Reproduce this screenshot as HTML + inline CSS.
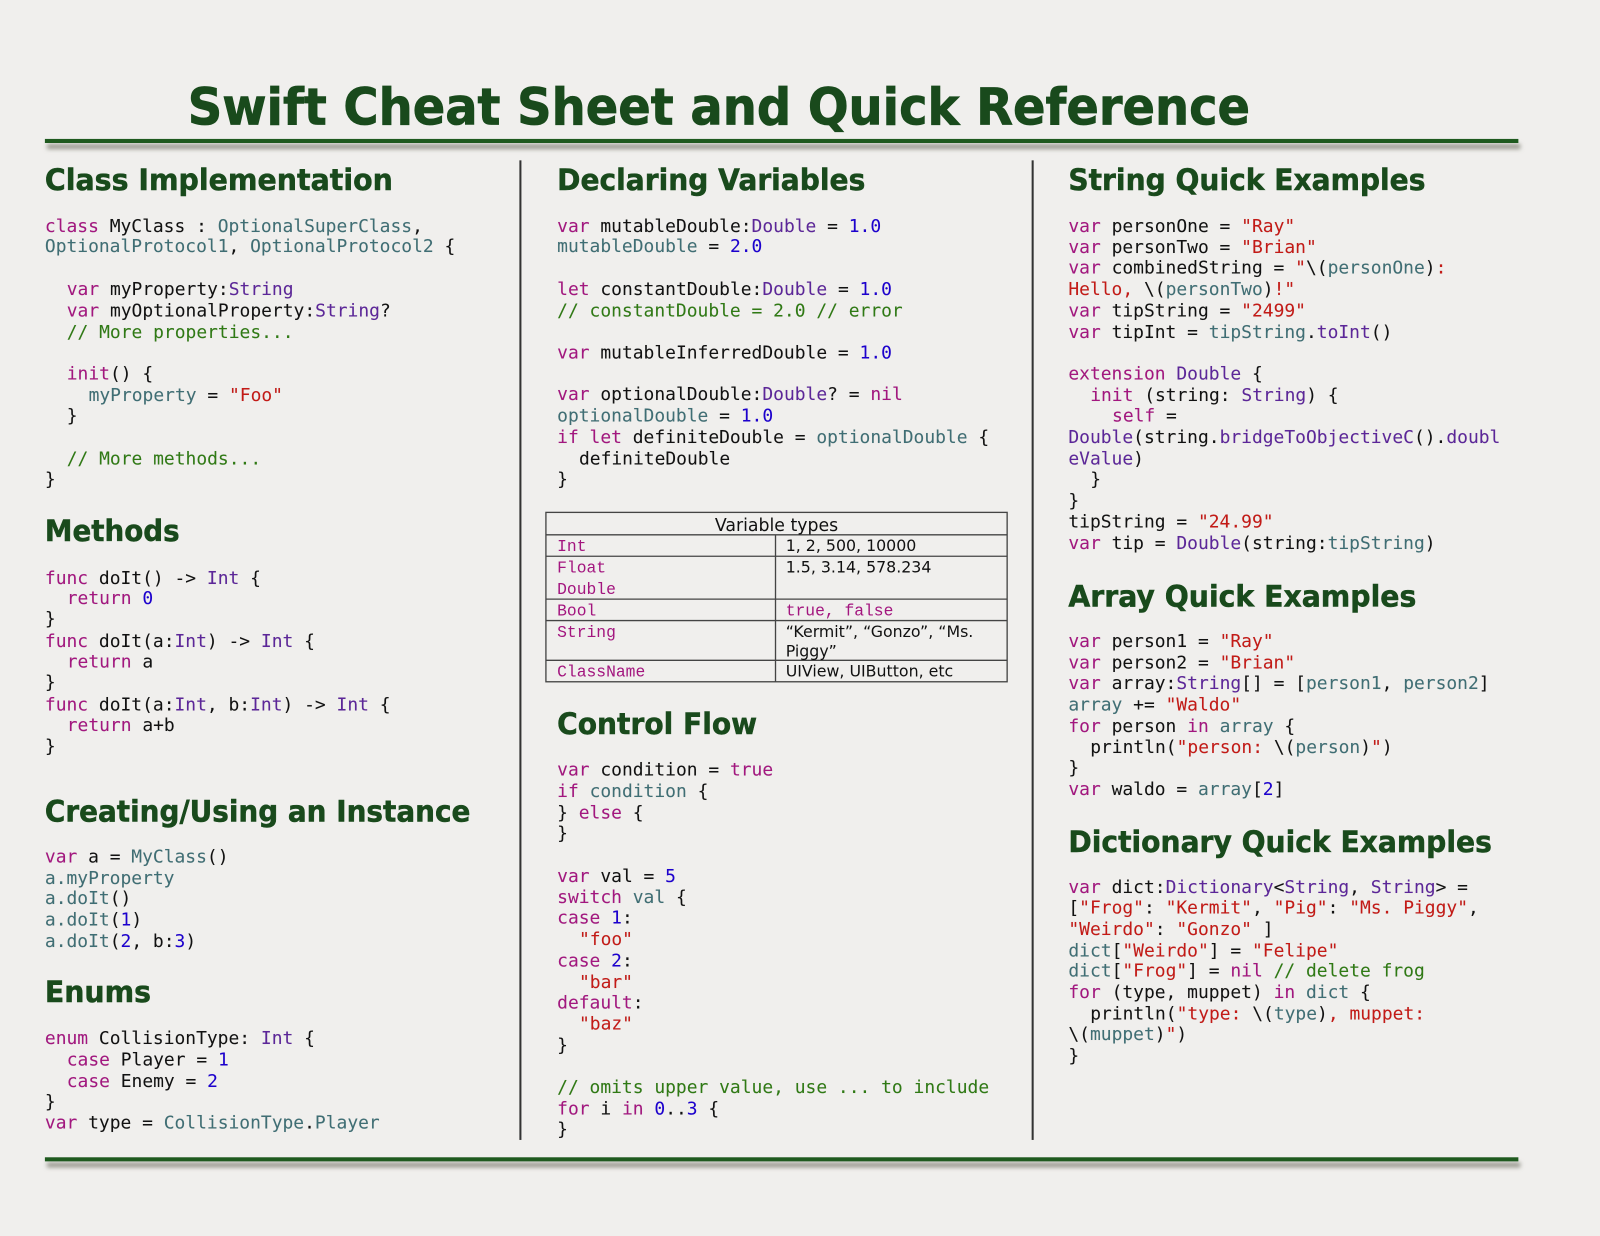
<!DOCTYPE html>
<html><head><meta charset="utf-8"><style>
html,body{margin:0;padding:0;background:#f0efed;}
svg{display:block}
.m{font-family:"DejaVu Sans Mono","Liberation Mono",monospace;font-size:17.6px;fill:#111;stroke:currentColor;stroke-width:0}
.m text, .m tspan{paint-order:stroke}
.h{font-family:"DejaVu Sans","Liberation Sans",sans-serif;font-weight:bold;fill:#194a1c;font-size:29px}
.k{fill:#a3167f}.t{fill:#5c2699}.s{fill:#c41a16}.n{fill:#1c00cf}.c{fill:#2f7a14}.i{fill:#3f6e74}
.tl{font-family:"Liberation Mono",monospace;font-size:16px;fill:#a3167f}
.tr{font-family:"DejaVu Sans","Liberation Sans",sans-serif;font-size:15.5px;fill:#111}
</style></head><body>
<svg width="1600" height="1236" viewBox="0 0 1568 1211" xmlns="http://www.w3.org/2000/svg" xml:space="preserve">
<defs><filter id="sh" x="-5%" y="-200%" width="110%" height="500%"><feGaussianBlur stdDeviation="2"/></filter></defs>
<rect width="1568" height="1211" fill="#f0efed"/>
<text x="184" y="122" class="h" style="font-size:50px;stroke:#194a1c;stroke-width:0.8" textLength="1041" lengthAdjust="spacingAndGlyphs">Swift Cheat Sheet and Quick Reference</text>
<rect x="46" y="141" width="1444" height="5" fill="#9a9a90" filter="url(#sh)"/>
<rect x="44" y="136" width="1444" height="4" fill="#1f5a1f"/>
<rect x="46" y="1139" width="1444" height="5" fill="#9a9a90" filter="url(#sh)"/>
<rect x="44" y="1134" width="1444" height="4" fill="#1f5a1f"/>
<rect x="509" y="157" width="2" height="960" fill="#333"/>
<rect x="1011" y="157" width="2" height="960" fill="#333"/>

<g style="stroke:#194a1c;stroke-width:0.5">
<text x="44" y="186" class="h" textLength="341" lengthAdjust="spacingAndGlyphs">Class Implementation</text>
<text x="44" y="530" class="h" textLength="132" lengthAdjust="spacingAndGlyphs">Methods</text>
<text x="44" y="805" class="h" textLength="417" lengthAdjust="spacingAndGlyphs">Creating/Using an Instance</text>
<text x="44" y="982" class="h" textLength="104" lengthAdjust="spacingAndGlyphs">Enums</text>
<text x="546" y="186" class="h" textLength="302" lengthAdjust="spacingAndGlyphs">Declaring Variables</text>
<text x="546" y="719" class="h" textLength="196" lengthAdjust="spacingAndGlyphs">Control Flow</text>
<text x="1047" y="186" class="h" textLength="350" lengthAdjust="spacingAndGlyphs">String Quick Examples</text>
<text x="1047" y="594" class="h" textLength="341" lengthAdjust="spacingAndGlyphs">Array Quick Examples</text>
<text x="1047" y="835" class="h" textLength="415" lengthAdjust="spacingAndGlyphs">Dictionary Quick Examples</text>
</g>

<g class="m" style="stroke:#00000022;stroke-width:0.3">
<text x="44" y="227"><tspan class="k">class</tspan> MyClass : <tspan class="i">OptionalSuperClass</tspan>,</text>
<text x="44" y="247"><tspan class="i">OptionalProtocol1</tspan>, <tspan class="i">OptionalProtocol2</tspan> {</text>
<text x="65.4" y="289"><tspan class="k">var</tspan> myProperty:<tspan class="t">String</tspan></text>
<text x="65.4" y="310"><tspan class="k">var</tspan> myOptionalProperty:<tspan class="t">String</tspan>?</text>
<text x="65.4" y="331" class="c">// More properties...</text>
<text x="65.4" y="372"><tspan class="k">init</tspan>()  {</text>
<text x="86.8" y="393"><tspan class="i">myProperty</tspan> = <tspan class="s">"Foo"</tspan></text>
<text x="65.4" y="413">}</text>
<text x="65.4" y="455" class="c">// More methods...</text>
<text x="44" y="475">}</text>

<text x="44" y="572"><tspan class="k">func</tspan> doIt() -&gt; <tspan class="t">Int</tspan> {</text>
<text x="65.4" y="592"><tspan class="k">return</tspan> <tspan class="n">0</tspan></text>
<text x="44" y="612">}</text>
<text x="44" y="634"><tspan class="k">func</tspan> doIt(a:<tspan class="t">Int</tspan>) -&gt; <tspan class="t">Int</tspan> {</text>
<text x="65.4" y="654"><tspan class="k">return</tspan> a</text>
<text x="44" y="674">}</text>
<text x="44" y="696"><tspan class="k">func</tspan> doIt(a:<tspan class="t">Int</tspan>, b:<tspan class="t">Int</tspan>) -&gt; <tspan class="t">Int</tspan> {</text>
<text x="65.4" y="716"><tspan class="k">return</tspan> a+b</text>
<text x="44" y="737">}</text>

<text x="44" y="845"><tspan class="k">var</tspan> a = <tspan class="i">MyClass</tspan>()</text>
<text x="44" y="866" class="i">a.myProperty</text>
<text x="44" y="886"><tspan class="i">a.doIt</tspan>()</text>
<text x="44" y="907"><tspan class="i">a.doIt</tspan>(<tspan class="n">1</tspan>)</text>
<text x="44" y="928"><tspan class="i">a.doIt</tspan>(<tspan class="n">2</tspan>, b:<tspan class="n">3</tspan>)</text>

<text x="44" y="1023"><tspan class="k">enum</tspan> CollisionType: <tspan class="t">Int</tspan> {</text>
<text x="65.4" y="1044"><tspan class="k">case</tspan> Player = <tspan class="n">1</tspan></text>
<text x="65.4" y="1065"><tspan class="k">case</tspan> Enemy = <tspan class="n">2</tspan></text>
<text x="44" y="1085">}</text>
<text x="44" y="1106"><tspan class="k">var</tspan> type = <tspan class="i">CollisionType</tspan>.<tspan class="i">Player</tspan></text>

<text x="546" y="227"><tspan class="k">var</tspan> mutableDouble:<tspan class="t">Double</tspan> = <tspan class="n">1.0</tspan></text>
<text x="546" y="247"><tspan class="i">mutableDouble</tspan> = <tspan class="n">2.0</tspan></text>
<text x="546" y="289"><tspan class="k">let</tspan> constantDouble:<tspan class="t">Double</tspan> = <tspan class="n">1.0</tspan></text>
<text x="546" y="310" class="c">// constantDouble = 2.0 // error</text>
<text x="546" y="351"><tspan class="k">var</tspan> mutableInferredDouble = <tspan class="n">1.0</tspan></text>
<text x="546" y="392"><tspan class="k">var</tspan> optionalDouble:<tspan class="t">Double</tspan>? = <tspan class="k">nil</tspan></text>
<text x="546" y="413"><tspan class="i">optionalDouble</tspan> = <tspan class="n">1.0</tspan></text>
<text x="546" y="434"><tspan class="k">if let</tspan> definiteDouble = <tspan class="i">optionalDouble</tspan> {</text>
<text x="567.4" y="455">definiteDouble</text>
<text x="546" y="475">}</text>

<text x="546" y="760"><tspan class="k">var</tspan> condition = <tspan class="k">true</tspan></text>
<text x="546" y="781"><tspan class="k">if</tspan> <tspan class="i">condition</tspan> {</text>
<text x="546" y="802">} <tspan class="k">else</tspan> {</text>
<text x="546" y="822">}</text>
<text x="546" y="864"><tspan class="k">var</tspan> val = <tspan class="n">5</tspan></text>
<text x="546" y="885"><tspan class="k">switch</tspan> <tspan class="i">val</tspan> {</text>
<text x="546" y="905"><tspan class="k">case</tspan> <tspan class="n">1</tspan>:</text>
<text x="567.4" y="926" class="s">"foo"</text>
<text x="546" y="947"><tspan class="k">case</tspan> <tspan class="n">2</tspan>:</text>
<text x="567.4" y="968" class="s">"bar"</text>
<text x="546" y="988"><tspan class="k">default</tspan>:</text>
<text x="567.4" y="1009" class="s">"baz"</text>
<text x="546" y="1030">}</text>
<text x="546" y="1071" class="c">// omits upper value, use ... to include</text>
<text x="546" y="1092"><tspan class="k">for</tspan> i <tspan class="k">in</tspan> <tspan class="n">0</tspan>..<tspan class="n">3</tspan> {</text>
<text x="546" y="1112">}</text>

<text x="1047" y="227"><tspan class="k">var</tspan> personOne = <tspan class="s">"Ray"</tspan></text>
<text x="1047" y="248"><tspan class="k">var</tspan> personTwo = <tspan class="s">"Brian"</tspan></text>
<text x="1047" y="268"><tspan class="k">var</tspan> combinedString = <tspan class="s">"</tspan>\(<tspan class="i">personOne</tspan>)<tspan class="s">:</tspan></text>
<text x="1047" y="289"><tspan class="s">Hello, </tspan>\(<tspan class="i">personTwo</tspan>)<tspan class="s">!"</tspan></text>
<text x="1047" y="310"><tspan class="k">var</tspan> tipString = <tspan class="s">"2499"</tspan></text>
<text x="1047" y="331"><tspan class="k">var</tspan> tipInt = <tspan class="i">tipString</tspan>.<tspan class="t">toInt</tspan>()</text>
<text x="1047" y="372"><tspan class="k">extension</tspan> <tspan class="t">Double</tspan> {</text>
<text x="1068.4" y="393"><tspan class="k">init</tspan> (string: <tspan class="t">String</tspan>) {</text>
<text x="1089.8" y="413"><tspan class="k">self</tspan> =</text>
<text x="1047" y="434"><tspan class="t">Double</tspan>(string.<tspan class="t">bridgeToObjectiveC</tspan>().<tspan class="t">doubl</tspan></text>
<text x="1047" y="455"><tspan class="t">eValue</tspan>)</text>
<text x="1068.4" y="475">}</text>
<text x="1047" y="496">}</text>
<text x="1047" y="517">tipString = <tspan class="s">"24.99"</tspan></text>
<text x="1047" y="538"><tspan class="k">var</tspan> tip = <tspan class="t">Double</tspan>(string:<tspan class="i">tipString</tspan>)</text>

<text x="1047" y="634"><tspan class="k">var</tspan> person1 = <tspan class="s">"Ray"</tspan></text>
<text x="1047" y="655"><tspan class="k">var</tspan> person2 = <tspan class="s">"Brian"</tspan></text>
<text x="1047" y="675"><tspan class="k">var</tspan> array:<tspan class="t">String</tspan>[] = [<tspan class="i">person1</tspan>, <tspan class="i">person2</tspan>]</text>
<text x="1047" y="696"><tspan class="i">array</tspan> += <tspan class="s">"Waldo"</tspan></text>
<text x="1047" y="717"><tspan class="k">for</tspan> person <tspan class="k">in</tspan> <tspan class="i">array</tspan> {</text>
<text x="1068.4" y="738">println(<tspan class="s">"person: </tspan>\(<tspan class="i">person</tspan>)<tspan class="s">"</tspan>)</text>
<text x="1047" y="758">}</text>
<text x="1047" y="779"><tspan class="k">var</tspan> waldo = <tspan class="i">array</tspan>[<tspan class="n">2</tspan>]</text>

<text x="1047" y="875"><tspan class="k">var</tspan> dict:<tspan class="t">Dictionary</tspan>&lt;<tspan class="t">String</tspan>, <tspan class="t">String</tspan>&gt; =</text>
<text x="1047" y="895">[<tspan class="s">"Frog"</tspan>: <tspan class="s">"Kermit"</tspan>, <tspan class="s">"Pig"</tspan>: <tspan class="s">"Ms. Piggy"</tspan>,</text>
<text x="1047" y="916"><tspan class="s">"Weirdo"</tspan>: <tspan class="s">"Gonzo"</tspan> ]</text>
<text x="1047" y="937"><tspan class="i">dict</tspan>[<tspan class="s">"Weirdo"</tspan>] = <tspan class="s">"Felipe"</tspan></text>
<text x="1047" y="957"><tspan class="i">dict</tspan>[<tspan class="s">"Frog"</tspan>] = <tspan class="k">nil</tspan> <tspan class="c">// delete frog</tspan></text>
<text x="1047" y="978"><tspan class="k">for</tspan> (type, muppet) <tspan class="k">in</tspan> <tspan class="i">dict</tspan> {</text>
<text x="1068.4" y="999">println(<tspan class="s">"type: </tspan>\(<tspan class="i">type</tspan>)<tspan class="s">, muppet:</tspan></text>
<text x="1047" y="1019">\(<tspan class="i">muppet</tspan>)<tspan class="s">"</tspan>)</text>
<text x="1047" y="1040">}</text>
</g>

<g fill="none" stroke="#444" stroke-width="1.3">
<rect x="535" y="502" width="452" height="166"/>
<line x1="535" y1="524" x2="987" y2="524"/>
<line x1="535" y1="545" x2="987" y2="545"/>
<line x1="535" y1="587" x2="987" y2="587"/>
<line x1="535" y1="608" x2="987" y2="608"/>
<line x1="535" y1="647" x2="987" y2="647"/>
<line x1="760" y1="524" x2="760" y2="668"/>
</g>
<text x="761" y="520" class="tr" text-anchor="middle" style="font-size:17px">Variable types</text>
<text x="546" y="540" class="tl">Int</text>
<text x="546" y="561" class="tl">Float</text>
<text x="546" y="582" class="tl">Double</text>
<text x="546" y="603" class="tl">Bool</text>
<text x="546" y="624" class="tl">String</text>
<text x="546" y="663" class="tl">ClassName</text>
<text x="770" y="540" class="tr">1, 2, 500, 10000</text>
<text x="770" y="561" class="tr">1.5, 3.14, 578.234</text>
<text x="770" y="603" class="tl">true, false</text>
<text x="770" y="624" class="tr">“Kermit”, “Gonzo”, “Ms.</text>
<text x="770" y="643" class="tr">Piggy”</text>
<text x="770" y="663" class="tr">UIView, UIButton, etc</text>
</svg>
</body></html>
